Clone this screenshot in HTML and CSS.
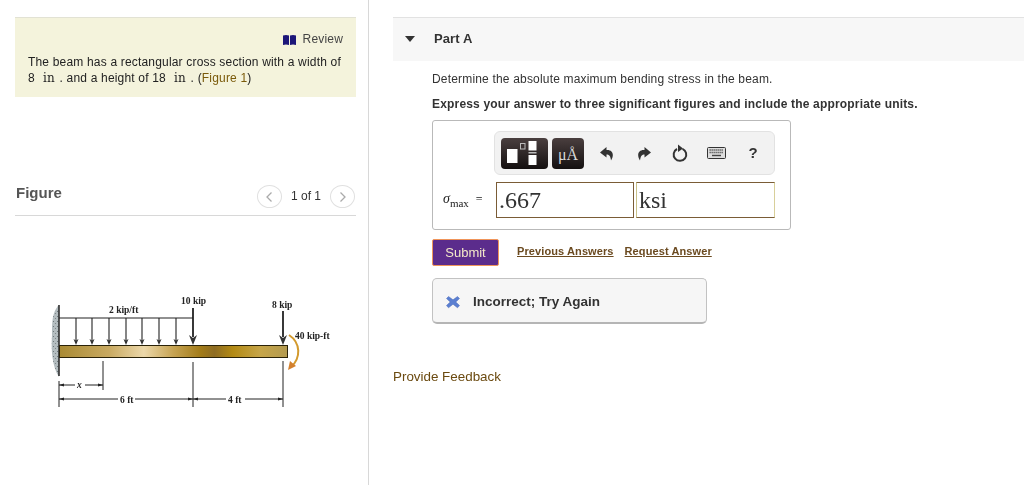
FILE: index.html
```html
<!DOCTYPE html>
<html lang="en">
<head>
<meta charset="utf-8">
<title>Part A</title>
<link rel="stylesheet" href="styles.css">
</head>
<body>
<div class="page">
  <aside class="left">
    <section class="intro">
      <div class="review-row">
        <svg class="book" width="13" height="10" viewBox="0 0 13 10"><path d="M0 0.500q3-1 6 0v9.500q-3-1-6 0zM7 0.500q3-1 6 0v9.500q-3-1-6 0z" fill="#1c1678"/></svg>
        <span class="review">Review</span>
      </div>
      <p class="intro-text">The beam has a rectangular cross section with a width of<br>8 <span class="unit">in</span> . and a height of 18 <span class="unit">in</span> . (<span class="link">Figure 1</span>)</p>
    </section>
    <div class="figure-head">
      <h2 class="figure-title">Figure</h2>
      <div class="pager">
        <span class="circle"><svg width="8" height="12" viewBox="0 0 8 12"><path d="M6.500 1.500 2 6l4.500 4.500" fill="none" stroke="#aaa" stroke-width="1.300"/></svg></span>
        <span class="count">1 of 1</span>
        <span class="circle"><svg width="8" height="12" viewBox="0 0 8 12"><path d="M1.500 1.500 6 6l-4.500 4.500" fill="none" stroke="#aaa" stroke-width="1.300"/></svg></span>
      </div>
    </div>
    <svg class="diagram" width="320" height="140" viewBox="30 280 320 140">
      <defs>
        <linearGradient id="wood" x1="0" x2="1" y1="0" y2="0">
          <stop offset="0" stop-color="#a98a34"/>
          <stop offset=".22" stop-color="#c9aa62"/>
          <stop offset=".37" stop-color="#ecd8aa"/>
          <stop offset=".5" stop-color="#c6a352"/>
          <stop offset=".62" stop-color="#a27b18"/>
          <stop offset=".68" stop-color="#8e6c22"/>
          <stop offset=".76" stop-color="#b38a14"/>
          <stop offset=".88" stop-color="#c6a548"/>
          <stop offset="1" stop-color="#b39a50"/>
        </linearGradient>
        <pattern id="rough" width="4" height="5" patternUnits="userSpaceOnUse">
          <rect width="4" height="5" fill="#b4bdc0"/>
          <rect x="1" y="1" width="1" height="1" fill="#6f787b"/>
          <rect x="3" y="3" width="1" height="1" fill="#7f888b"/>
        </pattern>
        <path id="head-small" d="M-2.500 -5 0 -3.500 2.500 -5 0 1z" fill="#333"/>
        <path id="head-big" d="M-4 -10 0 -7 4 -10 0 0z" fill="#333"/>
        <path id="dim-right" d="M-5 -1.500 0 0 -5 1.500z" fill="#222"/>
        <path id="dim-left" d="M5 -1.500 0 0 5 1.500z" fill="#222"/>
      </defs>
      <path d="M59 305 C52 312 52 322 52 335 C51 350 52 366 59 377Z" fill="url(#rough)"/>
      <line x1="59" y1="305" x2="59" y2="376" stroke="#222" stroke-width="1.500"/>
      <line x1="59" y1="318" x2="193" y2="318" stroke="#222" stroke-width="1.200"/>
      <g class="load">
        <line x1="76" y1="318" x2="76" y2="343"/>
        <line x1="92" y1="318" x2="92" y2="343"/>
        <line x1="109" y1="318" x2="109" y2="343"/>
        <line x1="126" y1="318" x2="126" y2="343"/>
        <line x1="142" y1="318" x2="142" y2="343"/>
        <line x1="159" y1="318" x2="159" y2="343"/>
        <line x1="176" y1="318" x2="176" y2="343"/>
      </g>
      <use href="#head-small" x="76" y="344"/>
      <use href="#head-small" x="92" y="344"/>
      <use href="#head-small" x="109" y="344"/>
      <use href="#head-small" x="126" y="344"/>
      <use href="#head-small" x="142" y="344"/>
      <use href="#head-small" x="159" y="344"/>
      <use href="#head-small" x="176" y="344"/>
      <line x1="193" y1="308" x2="193" y2="337" stroke="#222" stroke-width="1.800"/>
      <use href="#head-big" x="193" y="345"/>
      <line x1="283" y1="311" x2="283" y2="337" stroke="#222" stroke-width="1.800"/>
      <use href="#head-big" x="283" y="345"/>
      <rect x="59.500" y="345.500" width="228" height="12" fill="url(#wood)" stroke="#2a2208"/>
      <path d="M289 335 C301 343 301 358 291 367" fill="none" stroke="#d39a2e" stroke-width="2"/>
      <path d="M288 370l2-9 6 5z" fill="#d3802e"/>
      <g class="ticks">
        <line x1="59" y1="381" x2="59" y2="407"/>
        <line x1="103" y1="361" x2="103" y2="390"/>
        <line x1="193" y1="362" x2="193" y2="407"/>
        <line x1="283" y1="361" x2="283" y2="407"/>
        <line x1="59" y1="385" x2="75" y2="385"/>
        <line x1="85" y1="385" x2="103" y2="385"/>
        <line x1="59" y1="399" x2="118" y2="399"/>
        <line x1="135" y1="399" x2="193" y2="399"/>
        <line x1="193" y1="399" x2="226" y2="399"/>
        <line x1="245" y1="399" x2="283" y2="399"/>
      </g>
      <use href="#dim-left" x="59" y="385"/>
      <use href="#dim-right" x="103" y="385"/>
      <use href="#dim-left" x="59" y="399"/>
      <use href="#dim-right" x="193" y="399"/>
      <use href="#dim-left" x="193" y="399"/>
      <use href="#dim-right" x="283" y="399"/>
      <text class="dim" x="109" y="313">2 kip/ft</text>
      <text class="dim" x="181" y="304">10 kip</text>
      <text class="dim" x="272" y="308">8 kip</text>
      <text class="dim" x="295" y="339">40 kip-ft</text>
      <text class="dim italic" x="77" y="388">x</text>
      <text class="dim" x="120" y="403">6 ft</text>
      <text class="dim" x="228" y="403">4 ft</text>
    </svg>
  </aside>

  <main class="right">
    <header class="part-bar">
      <svg class="caret" width="10" height="6" viewBox="0 0 10 6"><path d="M0 0h10L5 6z" fill="#333"/></svg>
      <h1 class="part-title">Part A</h1>
    </header>
    <div class="part-body">
      <p class="question">Determine the absolute maximum bending stress in the beam.</p>
      <p class="instruction">Express your answer to three significant figures and include the appropriate units.</p>
      <div class="answer-box">
        <div class="toolbar">
          <span class="tool tool-wide">
            <svg width="47" height="31" viewBox="0 0 47 31">
              <rect x="6" y="11" width="10.500" height="14" fill="#fff"/>
              <rect x="19.500" y="5.500" width="4.500" height="5.500" fill="none" stroke="#bbb"/>
              <rect x="27.500" y="3" width="8" height="9.500" fill="#fff"/>
              <rect x="27.500" y="14" width="8" height="1.500" fill="#bbb"/>
              <rect x="27.500" y="17" width="8" height="10" fill="#fff"/>
            </svg>
          </span>
          <span class="tool tool-unit">μÅ</span>
          <span class="icon"><svg width="14" height="15" viewBox="0 0 14 15"><path d="M6.500 1 0 6.500l6.500 5V8.500C9 8.500 10.500 10 11 14.500 14.500 9 13 3.500 6.500 4z" fill="#333"/></svg></span>
          <span class="icon"><svg width="14" height="15" viewBox="0 0 14 15"><path d="M7.500 1 14 6.500l-6.500 5V8.500C5 8.500 3.500 10 3 14.500-.5 9 1 3.500 7.500 4z" fill="#333"/></svg></span>
          <span class="icon"><svg width="16" height="18" viewBox="0 0 16 18"><path d="M5 5a6.300 6.300 0 1 0 5.500-.2" fill="none" stroke="#333" stroke-width="2"/><path d="M6 0.500v7.500L11 4.500z" fill="#333"/></svg></span>
          <span class="icon"><svg width="19" height="12" viewBox="0 0 19 12"><rect x=".5" y=".5" width="18" height="11" rx="1" fill="#ddd" stroke="#333"/><path d="M2.500 3h14M2.500 5.500h14" stroke="#555" stroke-width="1.300" stroke-dasharray="1.300 .7"/><path d="M5 8.500h9" stroke="#444" stroke-width="1.400"/></svg></span>
          <span class="icon help">?</span>
        </div>
        <div class="answer-row">
          <span class="sigma"><i class="sigma-main">σ</i><sub>max</sub> =</span>
          <span class="field">.667</span>
          <span class="field field-unit">ksi</span>
        </div>
      </div>
      <div class="actions">
        <button class="submit" type="button">Submit</button>
        <a class="action-link" href="#">Previous Answers</a>
        <a class="action-link" href="#">Request Answer</a>
      </div>
      <div class="feedback">
        <svg width="14" height="14" viewBox="0 0 14 14"><path d="M2.500 1.500 7 4.800l4.500-3.300 2 2L9.800 7l3.700 3.500-2 2.300L7 9.200l-4.500 3.600-2-2.300L4.200 7 .5 3.500z" fill="#5b7fd1" stroke="#4a6bb8" stroke-width=".5"/></svg>
        <span class="feedback-text">Incorrect; Try Again</span>
      </div>
    </div>
    <a class="provide" href="#">Provide Feedback</a>
  </main>
</div>
</body>
</html>
```
FILE: styles.css
```css
* { box-sizing: border-box; }
html, body { margin: 0; padding: 0; }
body {
  width: 1024px;
  height: 485px;
  overflow: hidden;
  background: #fff;
  color: #222;
  font: 12px/1.25 "Liberation Sans", Arial, sans-serif;
  letter-spacing: .18px;
}
.page { display: flex; height: 485px; filter: blur(.35px); }

.left {
  width: 369px;
  padding: 17px 12px 0 15px;
  border-right: 1px solid #d8d8d8;
  flex: none;
}
.intro {
  height: 80px;
  padding: 14px 13px 0 13px;
  background: #f4f3dc;
  border-top: 1px solid #e2e2d4;
}
.review-row {
  display: flex;
  justify-content: flex-end;
  align-items: center;
  gap: 7px;
}
.book { flex: none; }
.review { color: #444; }
.intro-text { margin: 8px 0 0; line-height: 15.500px; }
.unit { font-family: "DejaVu Serif", serif; font-size: 12px; margin: 0 1px 0 4.500px; letter-spacing: .3px; }
.link { color: #7a5a0a; }

.figure-head {
  display: flex;
  align-items: flex-start;
  justify-content: space-between;
  height: 39px;
  margin-top: 80px;
  padding-top: 6px;
  border-bottom: 1px solid #d8d8d8;
}
.figure-title { margin: 0; font-size: 15px; font-weight: bold; color: #555; letter-spacing: 0; padding-top: 1px; padding-left: 1px; }
.pager { display: flex; align-items: center; gap: 9px; padding-right: 1px; margin-top: 2px; }
.circle {
  width: 25px;
  height: 23px;
  border: 1px solid #e0e0e0;
  border-radius: 50%;
  display: flex;
  align-items: center;
  justify-content: center;
}
.count { color: #333; letter-spacing: 0; }

.diagram { display: block; margin: 64px 0 0 15px; }
.load line { stroke: #222; stroke-width: 1.100; }
.ticks line { stroke: #222; stroke-width: 1; }
.dim {
  font-family: "Liberation Serif", serif;
  font-size: 9.500px;
  font-weight: bold;
  fill: #222;
  letter-spacing: 0;
}
.italic { font-style: italic; }

.right { flex: 1; padding: 17px 0 0 24px; min-width: 0; }
.part-bar {
  display: flex;
  align-items: center;
  height: 44px;
  padding-left: 12px;
  gap: 19px;
  background: #f7f7f7;
  border-top: 1px solid #e2e2e2;
}
.caret { flex: none; margin-bottom: 2px; }
.part-title { margin: 0; font-size: 13px; font-weight: bold; color: #333; letter-spacing: .1px; }
.part-body { padding: 11px 0 0 39px; }
.question { margin: 0; color: #333; line-height: 15px; }
.instruction { margin: 10px 0 0; font-weight: bold; color: #333; line-height: 15px; }

.answer-box {
  width: 359px;
  height: 110px;
  margin-top: 8px;
  padding: 10px 15px 0 10px;
  border: 1px solid #b9b9b9;
  border-radius: 3px;
}
.toolbar {
  display: flex;
  align-items: center;
  width: 281px;
  height: 44px;
  margin-left: 51px;
  padding-left: 6px;
  background: #f2f2f2;
  border: 1px solid #e2e2e2;
  border-radius: 6px;
}
.tool {
  display: flex;
  align-items: center;
  justify-content: center;
  height: 31px;
  border-radius: 4px;
  background: linear-gradient(#4a3f3f, #141010);
  color: #d8d8d8;
  letter-spacing: 0;
}
.tool-wide { width: 47px; margin-right: 4px; }
.tool-unit {
  width: 32px;
  font-family: "Liberation Serif", serif;
  font-size: 16px;
  padding-top: 4px;
}
.icon {
  width: 36.500px;
  display: flex;
  align-items: center;
  justify-content: center;
  color: #333;
}
.tool-unit + .icon { margin-left: 5px; }
.help { font-size: 15px; font-weight: bold; }

.answer-row { display: flex; align-items: center; margin-top: 7px; }
.sigma {
  width: 53px;
  padding-bottom: 2px;
  font-family: "Liberation Serif", serif;
  font-size: 12px;
  color: #222;
  letter-spacing: 0;
}
.sigma-main { font-size: 14px; }
.sigma sub { font-size: 11px; line-height: 0; margin-right: 4px; }
.field {
  display: block;
  width: 138px;
  height: 36px;
  margin-right: 2px;
  padding-left: 2px;
  border: 1px solid #7a5c36;
  background: #fff;
  font-family: "Liberation Serif", serif;
  font-size: 24px;
  line-height: 34px;
  color: #333;
  letter-spacing: 0;
}
.field-unit { width: 139px; margin-right: 0; border-left-color: #c9c28a; border-right-color: #d8cf9a; }

.actions { display: flex; align-items: center; margin-top: 9px; }
.submit {
  width: 67px;
  height: 27px;
  padding: 0;
  background: #5b2c8c;
  border: 1px solid #f0955a;
  border-radius: 2px;
  color: #f4e9c9;
  font: 13px "Liberation Sans", Arial, sans-serif;
}
.action-link { color: #6b4a20; font-size: 11px; font-weight: bold; letter-spacing: .1px; text-decoration: underline; margin-bottom: 2px; }
.submit + .action-link { margin-left: 18px; }
.action-link + .action-link { margin-left: 11px; }

.feedback {
  display: flex;
  align-items: center;
  gap: 13px;
  width: 275px;
  height: 46px;
  margin-top: 12px;
  padding: 3px 0 0 13px;
  background: #f6f6f6;
  border: 1px solid #c2c2c2;
  border-bottom: 2px solid #b5b5b5;
  border-radius: 5px;
}
.feedback-text { font-size: 13.500px; font-weight: bold; color: #333; letter-spacing: 0; }

.provide { display: block; margin-top: 45px; font-size: 13.400px; color: #6b4a10; text-decoration: none; letter-spacing: 0; }
```
